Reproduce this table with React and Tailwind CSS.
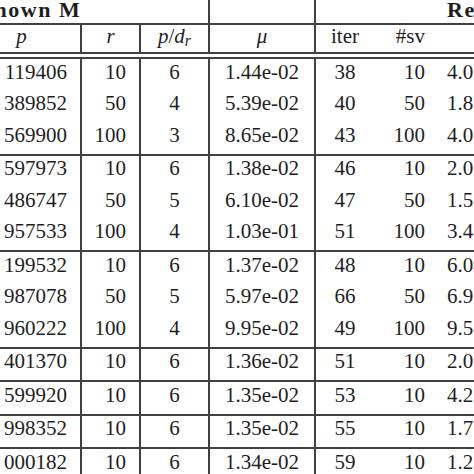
import React from "react";

const groups = [
  [
    ["119406", "10", "6", "1.44e-02", "38", "10", "4.05e-03"],
    ["389852", "50", "4", "5.39e-02", "40", "50", "1.82e-02"],
    ["569900", "100", "3", "8.65e-02", "43", "100", "4.01e-02"],
  ],
  [
    ["597973", "10", "6", "1.38e-02", "46", "10", "2.03e-03"],
    ["486747", "50", "5", "6.10e-02", "47", "50", "1.51e-02"],
    ["957533", "100", "4", "1.03e-01", "51", "100", "3.42e-02"],
  ],
  [
    ["199532", "10", "6", "1.37e-02", "48", "10", "6.04e-03"],
    ["987078", "50", "5", "5.97e-02", "66", "50", "6.91e-02"],
    ["960222", "100", "4", "9.95e-02", "49", "100", "9.52e-02"],
  ],
  [["401370", "10", "6", "1.36e-02", "51", "10", "2.03e-03"]],
  [["599920", "10", "6", "1.35e-02", "53", "10", "4.23e-03"]],
  [["998352", "10", "6", "1.35e-02", "55", "10", "1.71e-03"]],
  [["000182", "10", "6", "1.34e-02", "59", "10", "1.23e-03"]],
];

function Row({ r }) {
  return (
    <div className="flex h-[31.5px]">
      <div className="w-[119px] shrink-0 flex items-center justify-end pr-[13px] pb-[5px] border-r-2 border-[#404040]">{r[0]}</div>
      <div className="w-[59px] shrink-0 flex items-center justify-end pr-[13px] pb-[5px] border-r-2 border-[#404040]">{r[1]}</div>
      <div className="w-[69px] shrink-0 flex items-center justify-center pb-[5px] border-r-2 border-[#404040]">{r[2]}</div>
      <div className="w-[106px] shrink-0 flex items-center justify-center pb-[5px] border-r-2 border-[#404040]">{r[3]}</div>
      <div className="w-[58px] shrink-0 flex items-center justify-center pb-[5px]">{r[4]}</div>
      <div className="w-[65px] shrink-0 flex items-center justify-end pr-[14px] pb-[5px]">{r[5]}</div>
      <div className="w-[120px] shrink-0 flex items-center justify-start pl-[8px] pb-[5px]">{r[6]}</div>
    </div>
  );
}

export default function App() {
  return (
    <div className="w-[474px] h-[474px] overflow-hidden bg-white">
      <div
        className="ml-[-37px] w-[720px] text-[21px] leading-none text-[#1e1e1e]"
        style={{ fontFamily: '"Liberation Serif", "Times New Roman", serif' }}
      >
        {/* header row 1 */}
        <div className="flex h-[25px] border-b-2 border-[#404040]">
          <div className="w-[247px] shrink-0 flex items-center pl-[13px] pb-[4px] border-r-2 border-[#404040] font-bold text-[22px] tracking-[1.5px] whitespace-nowrap">
            Known M
          </div>
          <div className="w-[106px] shrink-0 border-r-2 border-[#404040]"></div>
          <div className="flex-1 flex items-center pl-[131px] pb-[4px] font-bold text-[22px] tracking-[1.5px] whitespace-nowrap">
            Results
          </div>
        </div>
        {/* header row 2 */}
        <div className="flex h-[29px] border-b-2 border-[#404040]">
          <div className="w-[119px] shrink-0 flex items-center justify-center pb-[5px] border-r-2 border-[#404040] italic">p</div>
          <div className="w-[59px] shrink-0 flex items-center justify-center pb-[5px] border-r-2 border-[#404040] italic">r</div>
          <div className="w-[69px] shrink-0 flex items-center justify-center pb-[5px] border-r-2 border-[#404040]">
            <span className="italic">p</span>
            <span>/</span>
            <span className="italic">d<sub className="italic">r</sub></span>
          </div>
          <div className="w-[106px] shrink-0 flex items-center justify-center pb-[5px] border-r-2 border-[#404040] italic">μ</div>
          <div className="w-[58px] shrink-0 flex items-center justify-center pb-[5px]">iter</div>
          <div className="w-[65px] shrink-0 flex items-center justify-end pr-[14px] pb-[5px]">#sv</div>
          <div className="w-[120px] shrink-0"></div>
        </div>
        {/* double rule gap */}
        <div className="h-[5px] border-b-2 border-[#404040]"></div>
        {groups.map((g, gi) => (
          <div key={gi} className="border-b-2 border-[#404040]">
            {g.map((r, ri) => (
              <Row key={ri} r={r} />
            ))}
          </div>
        ))}
      </div>
    </div>
  );
}
